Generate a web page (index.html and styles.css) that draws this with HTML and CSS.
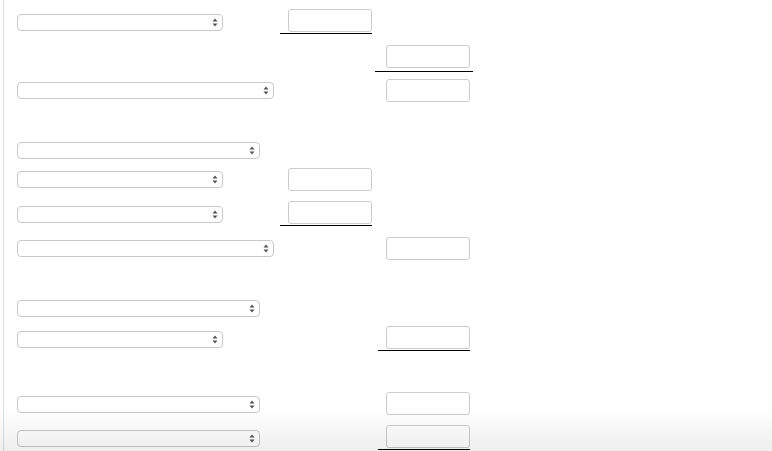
FILE: index.html
```html
<!DOCTYPE html>
<html>
<head>
<meta charset="utf-8">
<link rel="stylesheet" href="styles.css">
</head>
<body>
<div class="frame">
  <div class="sheet">
    <!-- R1 -->
    <div class="c1"><div class="select w-s sel-u"><svg class="arr" width="6" height="9" viewBox="0 0 6 9"><path d="M3 0.5 L5.5 3.6 H0.5 Z M3 8.5 L5.5 5.4 H0.5 Z" fill="#555"/></svg></div></div>
    <div class="c2 ul"><div class="inp"></div></div>
    <div class="c3"></div>
    <!-- R2 -->
    <div class="c1"></div>
    <div class="c2"></div>
    <div class="c3 ulw"><div class="inp"></div></div>
    <!-- R3 -->
    <div class="c1"><div class="select w-l"><svg class="arr" width="6" height="9" viewBox="0 0 6 9"><path d="M3 0.5 L5.5 3.6 H0.5 Z M3 8.5 L5.5 5.4 H0.5 Z" fill="#555"/></svg></div></div>
    <div class="c2"></div>
    <div class="c3 pad3"><div class="inp"></div></div>
    <!-- R4 -->
    <div class="c1"><div class="select w-m"><svg class="arr" width="6" height="9" viewBox="0 0 6 9"><path d="M3 0.5 L5.5 3.6 H0.5 Z M3 8.5 L5.5 5.4 H0.5 Z" fill="#555"/></svg></div></div>
    <div class="c2"></div>
    <div class="c3"></div>
    <!-- R5 -->
    <div class="c1"><div class="select w-s"><svg class="arr" width="6" height="9" viewBox="0 0 6 9"><path d="M3 0.5 L5.5 3.6 H0.5 Z M3 8.5 L5.5 5.4 H0.5 Z" fill="#555"/></svg></div></div>
    <div class="c2 pad2"><div class="inp"></div></div>
    <div class="c3"></div>
    <!-- R6 -->
    <div class="c1"><div class="select w-s sel-u"><svg class="arr" width="6" height="9" viewBox="0 0 6 9"><path d="M3 0.5 L5.5 3.6 H0.5 Z M3 8.5 L5.5 5.4 H0.5 Z" fill="#555"/></svg></div></div>
    <div class="c2 ul"><div class="inp"></div></div>
    <div class="c3"></div>
    <!-- R7 -->
    <div class="c1"><div class="select w-l"><svg class="arr" width="6" height="9" viewBox="0 0 6 9"><path d="M3 0.5 L5.5 3.6 H0.5 Z M3 8.5 L5.5 5.4 H0.5 Z" fill="#555"/></svg></div></div>
    <div class="c2"></div>
    <div class="c3 pad3"><div class="inp"></div></div>
    <!-- R8 -->
    <div class="c1"><div class="select w-m"><svg class="arr" width="6" height="9" viewBox="0 0 6 9"><path d="M3 0.5 L5.5 3.6 H0.5 Z M3 8.5 L5.5 5.4 H0.5 Z" fill="#555"/></svg></div></div>
    <div class="c2"></div>
    <div class="c3"></div>
    <!-- R9 -->
    <div class="c1"><div class="select w-s sel-u"><svg class="arr" width="6" height="9" viewBox="0 0 6 9"><path d="M3 0.5 L5.5 3.6 H0.5 Z M3 8.5 L5.5 5.4 H0.5 Z" fill="#555"/></svg></div></div>
    <div class="c2"></div>
    <div class="c3 uln"><div class="inp"></div></div>
    <!-- R10 -->
    <div class="c1"><div class="select w-m sel-d"><svg class="arr" width="6" height="9" viewBox="0 0 6 9"><path d="M3 0.5 L5.5 3.6 H0.5 Z M3 8.5 L5.5 5.4 H0.5 Z" fill="#555"/></svg></div></div>
    <div class="c2"></div>
    <div class="c3 pad3"><div class="inp"></div></div>
    <!-- R11 -->
    <div class="c1"><div class="select w-m sel-u"><svg class="arr" width="6" height="9" viewBox="0 0 6 9"><path d="M3 0.5 L5.5 3.6 H0.5 Z M3 8.5 L5.5 5.4 H0.5 Z" fill="#555"/></svg></div></div>
    <div class="c2"></div>
    <div class="c3 uln"><div class="inp"></div></div>
  </div>
</div>
<div class="fade"></div>
</body>
</html>
```

FILE: styles.css
```css
html, body {
  margin: 0;
  padding: 0;
  background: #ffffff;
  font-family: "Liberation Sans", Arial, sans-serif;
}
.frame {
  margin-left: 3px;
  border-left: 1px solid #d6e1ee;
  min-height: 451px;
  box-sizing: border-box;
  padding: 9px 0 0 13px;
}
.sheet {
  display: grid;
  grid-template-columns: 263px 95px 98px;
  grid-template-rows: 36px 34px 60px 29px 33px 36px 60px 29px 66px 33px 26px;
  align-items: start;
}
.c1, .c2, .c3 {
  box-sizing: border-box;
}
.select {
  position: relative;
  box-sizing: border-box;
  height: 17px;
  margin-top: 3px;
  border: 1px solid #c9c9c9;
  border-radius: 4px;
  background: #ffffff;
}
.sel-u { margin-top: 5px; }
.sel-d { margin-top: 4px; }
.w-s { width: 206px; }
.w-m { width: 243px; }
.w-l { width: 257px; }
.arr {
  position: absolute;
  right: 4px;
  top: 3px;
}
.inp {
  box-sizing: border-box;
  width: 84px;
  height: 23px;
  border: 1px solid #cccccc;
  border-radius: 3px;
  background: #ffffff;
}
.c2.pad2 { padding-left: 8px; }
.c2.ul {
  width: 92px;
  padding-left: 8px;
  padding-bottom: 1px;
  border-bottom: 1px solid #000000;
}
.c3.pad3 { padding-left: 11px; }
.c3.ulw {
  width: 98px;
  padding-left: 11px;
  padding-bottom: 3px;
  border-bottom: 1px solid #000000;
}
.c3.uln {
  width: 92px;
  margin-left: 3px;
  padding-left: 8px;
  padding-bottom: 1px;
  border-bottom: 1px solid #000000;
}
.fade {
  position: fixed;
  left: 0;
  right: 0;
  bottom: 0;
  height: 42px;
  pointer-events: none;
  background: linear-gradient(to bottom, rgba(0,0,0,0) 0%, rgba(0,0,0,0.065) 100%);
}
```
